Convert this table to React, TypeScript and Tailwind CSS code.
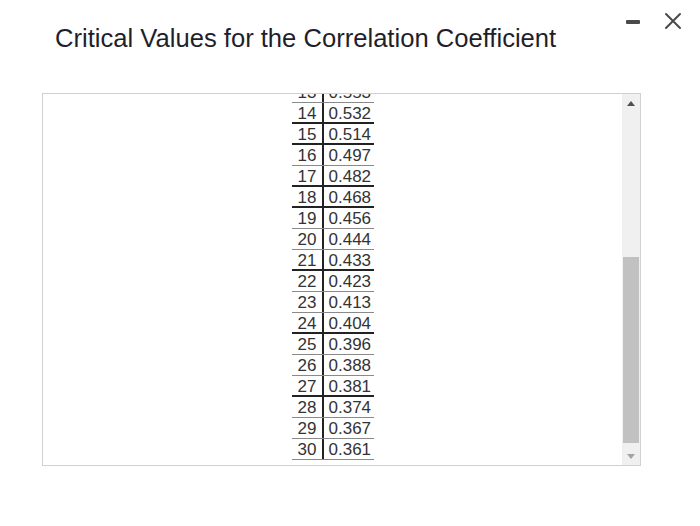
import React from "react";

const rows: [number, string][] = [
  [13, "0.553"],
  [14, "0.532"],
  [15, "0.514"],
  [16, "0.497"],
  [17, "0.482"],
  [18, "0.468"],
  [19, "0.456"],
  [20, "0.444"],
  [21, "0.433"],
  [22, "0.423"],
  [23, "0.413"],
  [24, "0.404"],
  [25, "0.396"],
  [26, "0.388"],
  [27, "0.381"],
  [28, "0.374"],
  [29, "0.367"],
  [30, "0.361"],
];

// rows followed by a heavy rule in the scanned table
const heavy = [14, 15, 17, 18, 21, 24, 27];

export default function App() {
  return (
    <div
      className="w-[700px] h-[526px] bg-white"
      style={{ fontFamily: '"Liberation Sans", Arial, sans-serif' }}
    >
      <div className="flex items-start justify-between pl-[55px] pr-[18px] pt-[22px]">
        <h1 className="text-[25.6px] leading-[32px] text-[#1f1f2b]">
          Critical Values for the Correlation Coefficient
        </h1>
        <div className="flex items-start gap-[24px] -mt-[10px]">
          <div className="w-[14px] h-[4px] mt-[8px] bg-[#4a4a4a] rounded-[1px]" />
          <svg width="18" height="18" viewBox="0 0 18 18" className="text-[#4a4a4a]">
            <path d="M2 2 L16 16 M16 2 L2 16" stroke="currentColor" strokeWidth="2" strokeLinecap="round" />
          </svg>
        </div>
      </div>

      <div className="ml-[42px] mt-[39px] w-[599px] h-[373px] border border-[#d0d0d0] flex">
        <div className="flex-1 overflow-hidden flex justify-center">
          <div className="-mt-[12px] w-[82px] text-[17px] text-[#333]">
            {rows.map(([n, v]) => (
              <div
                key={n}
                className={
                  "flex h-[21px] " +
                  (heavy.includes(n)
                    ? "border-b-[2px] border-[#222]"
                    : "border-b-[1px] border-[#8a8a8a]")
                }
              >
                <div className="w-[32px] pr-[5px] text-right leading-[21px] border-r-[2px] border-[#222]">
                  {n}
                </div>
                <div className="flex-1 pl-[5px] leading-[21px]">{v}</div>
              </div>
            ))}
          </div>
        </div>
        <div className="w-[18px] bg-[#f0f0f0] flex flex-col items-center">
          <div className="h-[18px] flex items-center justify-center">
            <svg width="8" height="5" viewBox="0 0 8 5">
              <path d="M0 5 L4 0 L8 5 Z" fill="#505050" />
            </svg>
          </div>
          <div className="flex-1 w-full flex flex-col px-[1px]">
            <div className="h-[145px]" />
            <div className="h-[186px] bg-[#c1c1c1]" />
          </div>
          <div className="h-[18px] flex items-center justify-center">
            <svg width="8" height="5" viewBox="0 0 8 5">
              <path d="M0 0 L4 5 L8 0 Z" fill="#a3a3a3" />
            </svg>
          </div>
        </div>
      </div>
    </div>
  );
}
